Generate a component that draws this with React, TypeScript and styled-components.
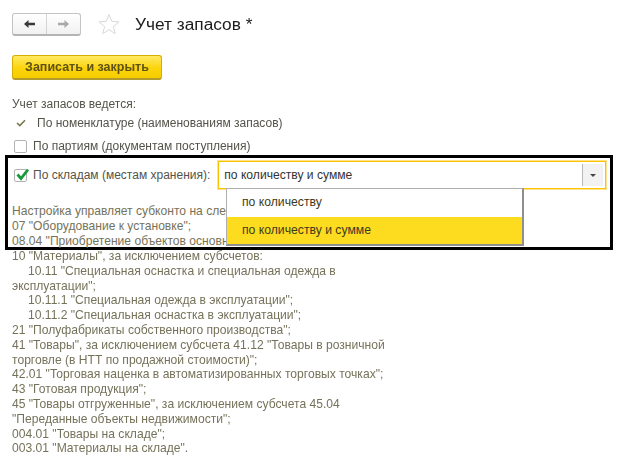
import React from "react";
import styled, { createGlobalStyle } from "styled-components";

const Global = createGlobalStyle`
  html, body { margin: 0; padding: 0; background: #fff; }
  body { font-family: "Liberation Sans", Arial, sans-serif; width: 628px; height: 469px; overflow: hidden; }
`;

const Page = styled.div`
  width: 628px;
  height: 469px;
  padding-top: 12px;
  box-sizing: border-box;
  filter: blur(0.4px);
`;

const Header = styled.div`
  display: flex;
  align-items: center;
  height: 24px;
  margin-left: 12px;
`;

const NavGroup = styled.div`
  display: flex;
  width: 69px;
  height: 23px;
  box-sizing: border-box;
  border: 1px solid #c4c4c4;
  border-bottom: 2px solid #b4b4b4;
  border-radius: 3px;
  background: linear-gradient(#ffffff, #f1f1f1);
`;

const NavButton = styled.div<{ $divider?: boolean }>`
  flex: 1;
  display: flex;
  align-items: center;
  justify-content: center;
  ${(p) => (p.$divider ? "border-right: 1px solid #d4d4d4;" : "")}
`;

const StarWrap = styled.div`
  margin-left: 17px;
  width: 22px;
  height: 24px;
  display: flex;
  align-items: center;
`;

const Title = styled.div`
  margin-left: 15px;
  font-size: 17.3px;
  line-height: 24px;
  color: #1c1c1c;
`;

const SaveButton = styled.div`
  margin: 19px 0 0 12px;
  width: 150px;
  height: 25px;
  box-sizing: border-box;
  border: 1px solid #d6b000;
  border-bottom: 2px solid #b29a2c;
  border-radius: 3px;
  background: linear-gradient(#ffe964, #fbd40c 55%, #f7cd00);
  color: #5f5215;
  font-size: 12.5px;
  font-weight: bold;
  line-height: 22px;
  text-align: center;
`;

const Label = styled.div`
  margin: 16px 0 0 12px;
  font-size: 12px;
  line-height: 16px;
  color: #54534a;
`;

const CheckRow = styled.div`
  display: flex;
  align-items: center;
  margin: 3px 0 0 16px;
  height: 16px;
  font-size: 12px;
  color: #54534a;
  gap: 11px;
`;

const Box = styled.div`
  width: 13px;
  height: 13px;
  box-sizing: border-box;
  border: 1px solid #b2b2b2;
  border-radius: 2px;
  background: #fff;
  position: relative;
  flex: none;
`;

const BoxRow = styled.div`
  display: flex;
  align-items: center;
  margin: 7px 0 0 14px;
  height: 16px;
  font-size: 12px;
  color: #54534a;
  gap: 6px;
`;

const Frame = styled.div`
  position: relative;
  margin: 1px 0 0 5px;
  width: 608px;
  height: 95px;
  box-sizing: border-box;
  border: 3px solid #000;
  background: #fff;
`;

const FieldRow = styled.div`
  display: flex;
  align-items: center;
  height: 30px;
  margin-top: 2px;
  padding-left: 6px;
  font-size: 12px;
  color: #54534a;
`;

const FieldBox = styled(Box)`
  margin-right: 6px;
`;

const Combo = styled.div`
  margin-left: 8px;
  width: 388px;
  height: 28px;
  box-sizing: border-box;
  border: 1px solid #fbc400;
  outline: 1px solid #ffe28a;
  display: flex;
  align-items: center;
  padding-left: 5px;
  font-size: 12.1px;
  color: #333;
`;

const ComboText = styled.div`
  flex: 1;
`;

const ComboButton = styled.div`
  width: 20px;
  height: 22px;
  margin-right: 2px;
  border-left: 1px solid #b8b8b8;
  background: #f2f2f2;
  display: flex;
  align-items: center;
  justify-content: center;
`;

const Arrow = styled.div`
  width: 0;
  height: 0;
  border-left: 3px solid transparent;
  border-right: 3px solid transparent;
  border-top: 3px solid #444;
`;

const Dropdown = styled.div`
  position: absolute;
  left: 218px;
  top: 30px;
  width: 298px;
  height: 58px;
  box-sizing: border-box;
  background: #fff;
  border: 1px solid #b0b0b0;
  border-right: 2px solid #8f8f8f;
  border-bottom: 2px solid #8f8f8f;
  z-index: 2;
`;

const Option = styled.div<{ $active?: boolean }>`
  height: 27.5px;
  line-height: 27px;
  padding-left: 15px;
  font-size: 12.2px;
  color: #3c3a20;
  background: ${(p) => (p.$active ? "#fddb1e" : "#fff")};
`;

const Notes = styled.div`
  font-size: 12.1px;
  line-height: 14.8px;
  color: #75725a;
  width: 380px;
`;

const FrameNotes = styled(Notes)`
  margin: 14px 0 0 4px;
  width: 214px;
  white-space: nowrap;
`;

const RestNotes = styled(Notes)`
  margin: -1px 0 0 12px;
`;

const Indent = styled.div`
  padding-left: 16px;
`;

const HangIndent = styled.div`
  text-indent: 16px;
`;

const Star = () => (
  <svg width="22" height="22" viewBox="0 0 22 22" fill="#fff" stroke="#d8d8d8" strokeWidth="1" strokeLinejoin="round">
    <path d="M11 1.5 L13.8 8.4 L21 8.9 L15.4 13.5 L17.2 20.6 L11 16.7 L4.8 20.6 L6.6 13.5 L1 8.9 L8.2 8.4 Z" />
  </svg>
);

const ArrowIcon = ({ dir, color }: { dir: "left" | "right"; color: string }) => (
  <svg width="13" height="10" viewBox="0 0 13 10" style={dir === "right" ? { transform: "scaleX(-1)" } : undefined}>
    <path d="M1 5 L5.5 1 L5.5 3.8 L12 3.8 L12 6.2 L5.5 6.2 L5.5 9 Z" fill={color} />
  </svg>
);

const Tick = () => (
  <svg width="10" height="8" viewBox="0 0 10 8">
    <path d="M1 4 L3.8 6.6 L9 1.2" fill="none" stroke="#7a7650" strokeWidth="1.6" />
  </svg>
);

const GreenTick = styled.svg`
  position: absolute;
  left: 1px;
  top: -2px;
`;

export default function App() {
  return (
    <Page>
      <Global />
      <Header>
        <NavGroup>
          <NavButton $divider>
            <ArrowIcon dir="left" color="#3a3a3a" />
          </NavButton>
          <NavButton>
            <ArrowIcon dir="right" color="#a8a8a8" />
          </NavButton>
        </NavGroup>
        <StarWrap>
          <Star />
        </StarWrap>
        <Title>Учет запасов *</Title>
      </Header>
      <SaveButton>Записать и закрыть</SaveButton>
      <Label>Учет запасов ведется:</Label>
      <CheckRow>
        <Tick />
        По номенклатуре (наименованиям запасов)
      </CheckRow>
      <BoxRow>
        <Box />
        По партиям (документам поступления)
      </BoxRow>
      <Frame>
        <FieldRow>
          <FieldBox>
            <GreenTick width="13" height="13" viewBox="0 0 13 13">
              <path d="M1.5 6.5 L5 10.5 L12 1.5" fill="none" stroke="#179a3c" strokeWidth="2.8" />
            </GreenTick>
          </FieldBox>
          По складам (местам хранения):
          <Combo>
            <ComboText>по количеству и сумме</ComboText>
            <ComboButton>
              <Arrow />
            </ComboButton>
          </Combo>
        </FieldRow>
        <FrameNotes>
          Настройка управляет субконто на сле
          <br />
          07 "Оборудование к установке";
          <br />
          08.04 "Приобретение объектов основн
        </FrameNotes>
        <Dropdown>
          <Option>по количеству</Option>
          <Option $active>по количеству и сумме</Option>
        </Dropdown>
      </Frame>
      <RestNotes>
        10 "Материалы", за исключением субсчетов:
        <HangIndent>10.11 "Специальная оснастка и специальная одежда в эксплуатации";</HangIndent>
        <Indent>10.11.1 "Специальная одежда в эксплуатации";</Indent>
        <Indent>10.11.2 "Специальная оснастка в эксплуатации";</Indent>
        21 "Полуфабрикаты собственного производства";
        <br />
        41 "Товары", за исключением субсчета 41.12 "Товары в розничной торговле (в НТТ по продажной стоимости)";
        <br />
        42.01 "Торговая наценка в автоматизированных торговых точках";
        <br />
        43 "Готовая продукция";
        <br />
        45 "Товары отгруженные", за исключением субсчета 45.04 "Переданные объекты недвижимости";
        <br />
        004.01 "Товары на складе";
        <br />
        003.01 "Материалы на складе".
      </RestNotes>
    </Page>
  );
}
